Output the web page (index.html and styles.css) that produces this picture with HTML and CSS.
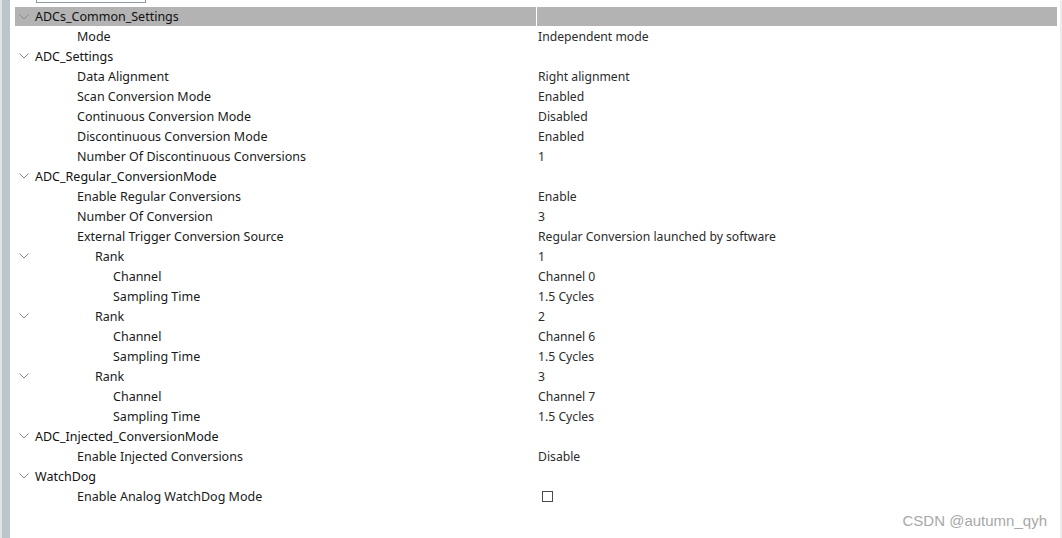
FILE: index.html
```html
<!DOCTYPE html>
<html>
<head>
<meta charset="utf-8">
<link rel="stylesheet" href="styles.css">
</head>
<body>
<div class="frame">
  <div class="sidebar"></div>
  <div class="main">
    <div class="topbox"></div>
    <div class="tree">
      <div class="row selected"><div class="c1"><span class="chev"><svg width="10" height="6" viewBox="0 0 10 6"><polyline points="0.5,0.5 5,5 9.5,0.5" fill="none" stroke="#8a8a8a" stroke-width="1"/></svg></span><span class="l0">ADCs_Common_Settings</span></div><div class="c2"></div></div>
      <div class="row"><div class="c1"><span class="l1">Mode</span></div><div class="c2">Independent mode</div></div>
      <div class="row"><div class="c1"><span class="chev"><svg width="10" height="6" viewBox="0 0 10 6"><polyline points="0.5,0.5 5,5 9.5,0.5" fill="none" stroke="#8a8a8a" stroke-width="1"/></svg></span><span class="l0">ADC_Settings</span></div><div class="c2"></div></div>
      <div class="row"><div class="c1"><span class="l1">Data Alignment</span></div><div class="c2">Right alignment</div></div>
      <div class="row"><div class="c1"><span class="l1">Scan Conversion Mode</span></div><div class="c2">Enabled</div></div>
      <div class="row"><div class="c1"><span class="l1">Continuous Conversion Mode</span></div><div class="c2">Disabled</div></div>
      <div class="row"><div class="c1"><span class="l1">Discontinuous Conversion Mode</span></div><div class="c2">Enabled</div></div>
      <div class="row"><div class="c1"><span class="l1">Number Of Discontinuous Conversions</span></div><div class="c2">1</div></div>
      <div class="row"><div class="c1"><span class="chev"><svg width="10" height="6" viewBox="0 0 10 6"><polyline points="0.5,0.5 5,5 9.5,0.5" fill="none" stroke="#8a8a8a" stroke-width="1"/></svg></span><span class="l0">ADC_Regular_ConversionMode</span></div><div class="c2"></div></div>
      <div class="row"><div class="c1"><span class="l1">Enable Regular Conversions</span></div><div class="c2">Enable</div></div>
      <div class="row"><div class="c1"><span class="l1">Number Of Conversion</span></div><div class="c2">3</div></div>
      <div class="row"><div class="c1"><span class="l1">External Trigger Conversion Source</span></div><div class="c2">Regular Conversion launched by software</div></div>
      <div class="row"><div class="c1"><span class="chev"><svg width="10" height="6" viewBox="0 0 10 6"><polyline points="0.5,0.5 5,5 9.5,0.5" fill="none" stroke="#8a8a8a" stroke-width="1"/></svg></span><span class="lr">Rank</span></div><div class="c2">1</div></div>
      <div class="row"><div class="c1"><span class="l2">Channel</span></div><div class="c2">Channel 0</div></div>
      <div class="row"><div class="c1"><span class="l2">Sampling Time</span></div><div class="c2">1.5 Cycles</div></div>
      <div class="row"><div class="c1"><span class="chev"><svg width="10" height="6" viewBox="0 0 10 6"><polyline points="0.5,0.5 5,5 9.5,0.5" fill="none" stroke="#8a8a8a" stroke-width="1"/></svg></span><span class="lr">Rank</span></div><div class="c2">2</div></div>
      <div class="row"><div class="c1"><span class="l2">Channel</span></div><div class="c2">Channel 6</div></div>
      <div class="row"><div class="c1"><span class="l2">Sampling Time</span></div><div class="c2">1.5 Cycles</div></div>
      <div class="row"><div class="c1"><span class="chev"><svg width="10" height="6" viewBox="0 0 10 6"><polyline points="0.5,0.5 5,5 9.5,0.5" fill="none" stroke="#8a8a8a" stroke-width="1"/></svg></span><span class="lr">Rank</span></div><div class="c2">3</div></div>
      <div class="row"><div class="c1"><span class="l2">Channel</span></div><div class="c2">Channel 7</div></div>
      <div class="row"><div class="c1"><span class="l2">Sampling Time</span></div><div class="c2">1.5 Cycles</div></div>
      <div class="row"><div class="c1"><span class="chev"><svg width="10" height="6" viewBox="0 0 10 6"><polyline points="0.5,0.5 5,5 9.5,0.5" fill="none" stroke="#8a8a8a" stroke-width="1"/></svg></span><span class="l0">ADC_Injected_ConversionMode</span></div><div class="c2"></div></div>
      <div class="row"><div class="c1"><span class="l1">Enable Injected Conversions</span></div><div class="c2">Disable</div></div>
      <div class="row"><div class="c1"><span class="chev"><svg width="10" height="6" viewBox="0 0 10 6"><polyline points="0.5,0.5 5,5 9.5,0.5" fill="none" stroke="#8a8a8a" stroke-width="1"/></svg></span><span class="l0">WatchDog</span></div><div class="c2"></div></div>
      <div class="row"><div class="c1"><span class="l1">Enable Analog WatchDog Mode</span></div><div class="c2"><span class="checkbox"></span></div></div>
    </div>
    <div class="watermark">CSDN @autumn_qyh</div>
  </div>
  <div class="scrolledge"></div>
</div>
</body>
</html>
```

FILE: styles.css
```css
html, body {
  margin: 0;
  padding: 0;
  background: #ffffff;
}
body {
  font-family: "Noto Sans", "Open Sans", sans-serif;
  font-size: 12.5px;
  color: #1a1a1a;
}
.frame {
  display: flex;
  width: 1062px;
  height: 538px;
  overflow: hidden;
}
.sidebar {
  width: 8px;
  border-left: 2px solid #dfe4e6;
  background: #bcc5c9;
  flex: none;
}
.main {
  flex: 1;
  display: flex;
  flex-direction: column;
  padding-left: 5px;
  padding-right: 3px;
  position: relative;
}
.topbox {
  margin-left: 21px;
  width: 108px;
  height: 2px;
  border: 1px solid #8c9aa1;
  border-top: none;
  flex: none;
}
.tree {
  margin-top: 3px;
  display: flex;
  flex-direction: column;
}
.row {
  display: flex;
  height: 20px;
  align-items: center;
  box-sizing: border-box;
}
.row.selected {
  border-top: 1px solid #ffffff;
}
.row.selected .c1,
.row.selected .c2 {
  background: #b3b3b3;
}
.c1 {
  width: 521px;
  height: 100%;
  display: flex;
  align-items: center;
  position: relative;
  flex: none;
  white-space: nowrap;
}
.c2 {
  flex: 1;
  height: 100%;
  margin-left: 1px;
  display: flex;
  align-items: center;
  padding-left: 1px;
  color: #2b2b2b;
  font-size: 12.2px;
  white-space: nowrap;
}
.chev {
  position: absolute;
  left: 4px;
  top: 7px;
  width: 10px;
  height: 6px;
  display: flex;
}
.l0 { padding-left: 20px; color: #111; }
.l1 { padding-left: 62px; }
.lr { padding-left: 80px; }
.l2 { padding-left: 98px; }
.checkbox {
  display: inline-block;
  width: 9px;
  height: 9px;
  border: 1.5px solid #4a4a4a;
  margin-left: 4px;
}
.watermark {
  position: absolute;
  right: 13px;
  bottom: 9px;
  font-family: "Liberation Sans", sans-serif;
  font-size: 15px;
  color: #a8a8a8;
}
.scrolledge {
  width: 2px;
  background: #ececec;
  flex: none;
}
```
